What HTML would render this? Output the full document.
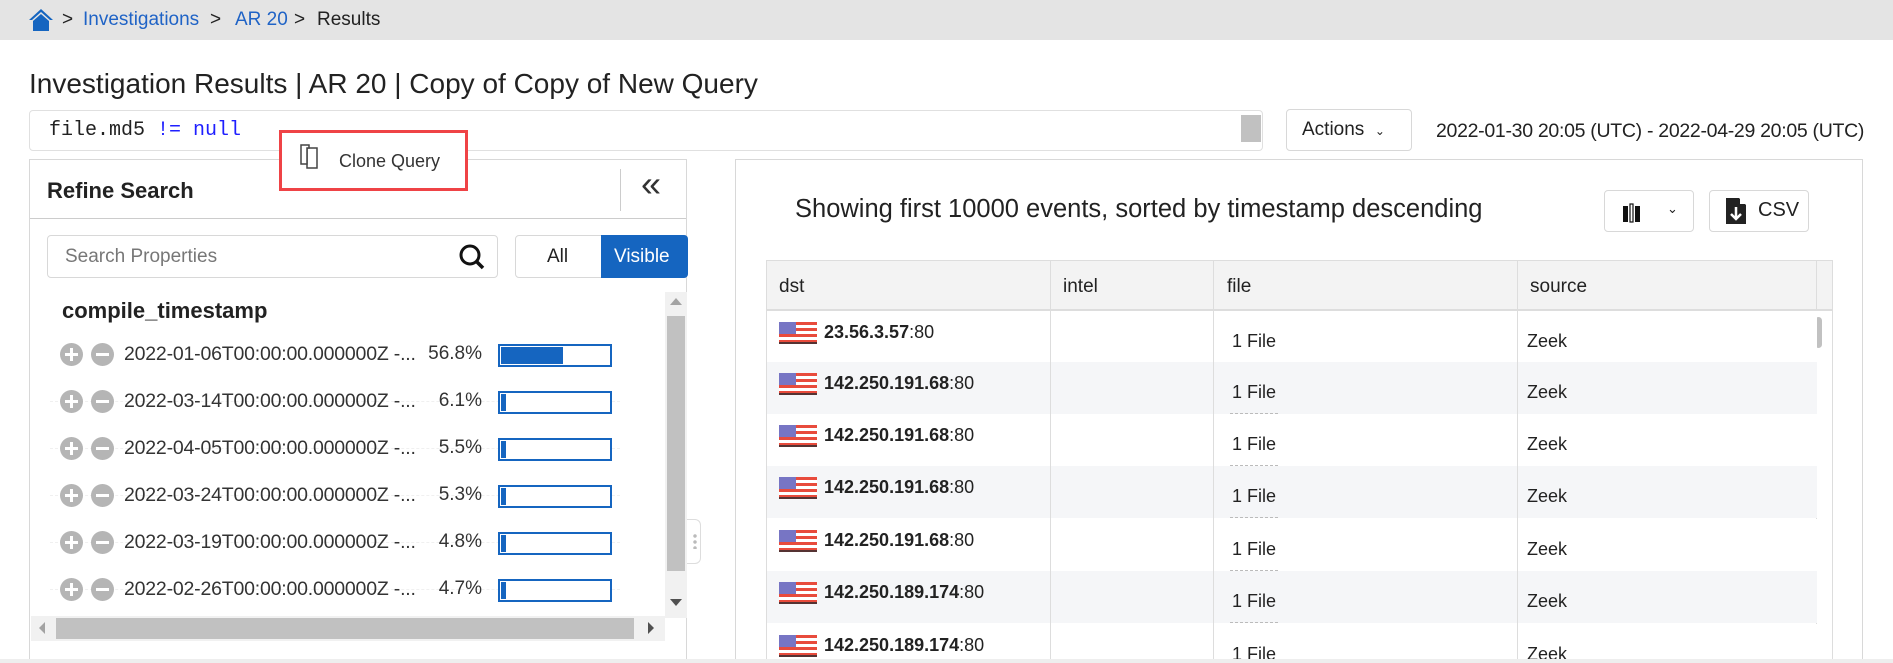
<!DOCTYPE html>
<html><head><meta charset="utf-8"><style>
*{box-sizing:border-box;margin:0;padding:0}
body{width:1893px;height:663px;overflow:hidden;background:#fff;font-family:"Liberation Sans",Arial,sans-serif;color:#222;position:relative}
.abs{position:absolute}
.crumb{left:0;top:0;width:1893px;height:40px;background:#e4e4e4}
.crumb span{position:absolute;top:9px;font-size:19px}
.blue{color:#1f63c6}
.page{left:0;top:40px;width:1893px;height:623px;background:#fff;border-radius:6px 6px 0 0}
.btn{border:1px solid #d8d8d8;border-radius:4px;background:#fff}
.row{position:absolute;left:50px;width:570px;height:47px;border-bottom:1px dashed #f0f0f0}
.circ{position:absolute;width:23px;height:23px;border-radius:50%;background:#b5b5b5;top:-12px}
.circ:before{content:"";position:absolute;left:5px;top:10px;width:13px;height:3px;background:#fff}
.plus:after{content:"";position:absolute;left:10px;top:5px;width:3px;height:13px;background:#fff}
.rtxt{position:absolute;left:74px;top:-12px;font-size:19.5px;color:#333;white-space:nowrap;letter-spacing:-0.2px}
.pct{position:absolute;right:138px;top:-12px;font-size:19px;color:#333}
.bar{position:absolute;left:448px;top:-11px;width:114px;height:23px;border:2px solid #1565c0;background:#fff}
.bar i{position:absolute;left:1px;top:1px;height:17px;background:#1565c0}
.tr{position:absolute;left:767px;width:1050px;height:52px}
.flag{position:absolute;left:12px;top:11px;width:38px;height:22px;background:repeating-linear-gradient(#e84b3c 0 3px,#fff 3px 6px);border-bottom:2px solid #533}
.flag:before{content:"";position:absolute;left:0;top:0;width:17px;height:12px;background:#7775c4}
.dst{position:absolute;left:57px;top:11px;font-size:18px}
.file{position:absolute;left:17px;top:20px;font-size:18px;padding:0 2px 10px;border-bottom:1px dashed #bbb}
.src{position:absolute;left:10px;top:20px;font-size:18px}
</style></head><body>
<div class="abs crumb">
<svg class="abs" style="left:28px;top:8px" width="26" height="24" viewBox="0 0 26 24"><path d="M13 1 L1 12 L4 12 L13 4 L22 12 L25 12 Z" fill="#1565c0"/><path d="M5 13 L13 6 L21 13 L21 23 L5 23 Z" fill="#1565c0"/></svg>
<span style="left:62px">&gt;</span><span class="blue" style="left:83px">Investigations</span><span style="left:210px">&gt;</span><span class="blue" style="left:235px">AR 20</span><span style="left:294px">&gt;</span><span style="left:317px">Results</span>
</div>
<div class="abs page"></div>
<div class="abs" style="left:29px;top:68px;font-size:28px;color:#222">Investigation Results | AR 20 | Copy of Copy of New Query</div>
<div class="abs btn" style="left:29px;top:110px;width:1234px;height:41px;border-color:#e0e0e0"></div>
<div class="abs" style="left:49px;top:119px;font-family:'Liberation Mono',monospace;font-size:20px">file.md5 <span style="color:#1f1fff">!= null</span></div>
<div class="abs" style="left:1241px;top:115px;width:20px;height:27px;background:#c1c1c1"></div>
<div class="abs btn" style="left:1286px;top:109px;width:126px;height:42px"></div>
<div class="abs" style="left:1302px;top:119px;font-size:19px">Actions &nbsp;<span style="font-size:12px">&#8964;</span></div>
<div class="abs" style="left:1436px;top:120px;font-size:19.5px;letter-spacing:-0.3px">2022-01-30 20:05 (UTC) - 2022-04-29 20:05 (UTC)</div>

<div class="abs" style="left:29px;top:159px;width:658px;height:504px;border:1px solid #d8d8d8;border-bottom:none"></div>
<div class="abs" style="left:30px;top:218px;width:656px;height:1px;background:#ccc"></div>
<div class="abs" style="left:47px;top:178px;font-size:22px;font-weight:bold">Refine Search</div>
<div class="abs" style="left:620px;top:169px;width:1px;height:42px;background:#ccc"></div>
<div class="abs" style="left:641px;top:166px;font-size:36px;color:#333;line-height:1">&#171;</div>
<div class="abs btn" style="left:47px;top:235px;width:451px;height:43px"></div>
<div class="abs" style="left:65px;top:246px;font-size:19px;color:#777">Search Properties</div>
<svg class="abs" style="left:458px;top:243px" width="28" height="28" viewBox="0 0 28 28"><circle cx="12" cy="12" r="9" fill="none" stroke="#111" stroke-width="3"/><path d="M18 18 L25 25" stroke="#111" stroke-width="3.5"/></svg>
<div class="abs btn" style="left:515px;top:235px;width:173px;height:43px"></div>
<div class="abs" style="left:601px;top:235px;width:87px;height:43px;background:#1565c0;border-radius:0 4px 4px 0"></div>
<div class="abs" style="left:547px;top:246px;font-size:19px">All</div>
<div class="abs" style="left:614px;top:246px;font-size:19px;color:#fff">Visible</div>
<div class="abs" style="left:62px;top:298px;font-size:22px;font-weight:bold;color:#222">compile_timestamp</div>
<div class="row" style="top:355px"><div class="circ plus" style="left:10px"></div><div class="circ" style="left:41px"></div><div class="rtxt">2022-01-06T00:00:00.000000Z -...</div><div class="pct">56.8%</div><div class="bar"><i style="width:62px"></i></div></div>
<div class="row" style="top:402px"><div class="circ plus" style="left:10px"></div><div class="circ" style="left:41px"></div><div class="rtxt">2022-03-14T00:00:00.000000Z -...</div><div class="pct">6.1%</div><div class="bar"><i style="width:5px"></i></div></div>
<div class="row" style="top:449px"><div class="circ plus" style="left:10px"></div><div class="circ" style="left:41px"></div><div class="rtxt">2022-04-05T00:00:00.000000Z -...</div><div class="pct">5.5%</div><div class="bar"><i style="width:5px"></i></div></div>
<div class="row" style="top:496px"><div class="circ plus" style="left:10px"></div><div class="circ" style="left:41px"></div><div class="rtxt">2022-03-24T00:00:00.000000Z -...</div><div class="pct">5.3%</div><div class="bar"><i style="width:5px"></i></div></div>
<div class="row" style="top:543px"><div class="circ plus" style="left:10px"></div><div class="circ" style="left:41px"></div><div class="rtxt">2022-03-19T00:00:00.000000Z -...</div><div class="pct">4.8%</div><div class="bar"><i style="width:5px"></i></div></div>
<div class="row" style="top:590px;border:none"><div class="circ plus" style="left:10px"></div><div class="circ" style="left:41px"></div><div class="rtxt">2022-02-26T00:00:00.000000Z -...</div><div class="pct">4.7%</div><div class="bar"><i style="width:5px"></i></div></div>
<div class="abs" style="left:665px;top:292px;width:22px;height:326px;background:#f1f1f1"></div>
<div class="abs" style="left:667px;top:316px;width:18px;height:255px;background:#c1c1c1"></div>
<div class="abs" style="left:670px;top:298px;width:0;height:0;border:6px solid transparent;border-bottom:7px solid #a3a3a3;border-top:none"></div>
<div class="abs" style="left:670px;top:599px;width:0;height:0;border:6px solid transparent;border-top:7px solid #505050;border-bottom:none"></div>
<div class="abs" style="left:31px;top:616px;width:634px;height:25px;background:#f1f1f1"></div>
<div class="abs" style="left:56px;top:618px;width:578px;height:21px;background:#c1c1c1"></div>
<div class="abs" style="left:39px;top:622px;border:6px solid transparent;border-right:6px solid #a3a3a3;border-left:none"></div>
<div class="abs" style="left:648px;top:622px;border:6px solid transparent;border-left:6px solid #505050;border-right:none"></div>
<div class="abs" style="left:687px;top:519px;width:14px;height:45px;border:1px solid #ddd;border-left:none;border-radius:0 6px 6px 0;background:#fff"></div>
<div class="abs" style="left:693px;top:533px;width:4px;height:16px;background:radial-gradient(circle,#bbb 1.5px,transparent 2px) 0 0/4px 6px"></div>

<div class="abs" style="left:279px;top:130px;width:189px;height:61px;border:3px solid #ef4346;background:#fff"></div>
<svg class="abs" style="left:299px;top:144px" width="24" height="28" viewBox="0 0 24 28"><path d="M8 4 H18 V24 H8 Z" fill="none" stroke="#444" stroke-width="1.5"/><path d="M2 1 H10 V4 H8 V20 H2 Z" fill="#fff" stroke="#444" stroke-width="1.5"/></svg>
<div class="abs" style="left:339px;top:151px;font-size:18px;color:#333">Clone Query</div>

<div class="abs" style="left:735px;top:159px;width:1128px;height:504px;border:1px solid #d8d8d8;border-bottom:none"></div>
<div class="abs" style="left:795px;top:195px;font-size:25.5px;color:#222">Showing first 10000 events, sorted by timestamp descending</div>
<div class="abs btn" style="left:1604px;top:190px;width:90px;height:42px"></div>
<svg class="abs" style="left:1622px;top:201px" width="20" height="22" viewBox="0 0 20 22"><rect x="1" y="5" width="5" height="16" fill="#111"/><rect x="8" y="3" width="3" height="18" fill="none" stroke="#111" stroke-width="1.2"/><rect x="13" y="5" width="5" height="16" fill="#111"/></svg>
<div class="abs" style="left:1667px;top:201px;font-size:13px">&#8964;</div>
<div class="abs btn" style="left:1709px;top:190px;width:100px;height:42px"></div>
<svg class="abs" style="left:1725px;top:197px" width="22" height="28" viewBox="0 0 22 28"><path d="M1 1 H14 L21 8 V27 H1 Z" fill="#222"/><path d="M15 1 L21 7 H15 Z" fill="#fff"/><path d="M11 10 V22 M6 17 L11 22 L16 17" stroke="#fff" stroke-width="2.5" fill="none"/></svg>
<div class="abs" style="left:1758px;top:199px;font-size:20px">CSV</div>

<div class="abs" style="left:766px;top:260px;width:1067px;height:403px;border:1px solid #ddd;border-bottom:none"></div>
<div class="abs" style="left:767px;top:261px;width:1065px;height:50px;background:#f3f3f3;border-bottom:2px solid #ddd"></div>
<div class="abs" style="left:1816px;top:261px;width:1px;height:50px;background:#ddd"></div>
<div class="abs" style="left:1816px;top:311px;width:1px;height:352px;background:#ddd"></div>
<div class="abs" style="left:1815px;top:317px;width:7px;height:31px;border-radius:4px;background:#c1c1c1"></div>
<div class="abs" style="left:779px;top:276px;font-size:19px">dst</div>
<div class="abs" style="left:1063px;top:276px;font-size:19px">intel</div>
<div class="abs" style="left:1227px;top:276px;font-size:19px">file</div>
<div class="abs" style="left:1530px;top:276px;font-size:19px">source</div>

<div class="tr" style="top:311px;background:#fff"><span class="flag"></span><span class="dst"><b>23.56.3.57</b>:80</span><span class="file" style="left:463px">1 File</span><span class="src" style="left:760px">Zeek</span></div>
<div class="tr" style="top:362px;background:#f5f6f8"><span class="flag"></span><span class="dst"><b>142.250.191.68</b>:80</span><span class="file" style="left:463px">1 File</span><span class="src" style="left:760px">Zeek</span></div>
<div class="tr" style="top:414px;background:#fff"><span class="flag"></span><span class="dst"><b>142.250.191.68</b>:80</span><span class="file" style="left:463px">1 File</span><span class="src" style="left:760px">Zeek</span></div>
<div class="tr" style="top:466px;background:#f5f6f8"><span class="flag"></span><span class="dst"><b>142.250.191.68</b>:80</span><span class="file" style="left:463px">1 File</span><span class="src" style="left:760px">Zeek</span></div>
<div class="tr" style="top:519px;background:#fff"><span class="flag"></span><span class="dst"><b>142.250.191.68</b>:80</span><span class="file" style="left:463px">1 File</span><span class="src" style="left:760px">Zeek</span></div>
<div class="tr" style="top:571px;background:#f5f6f8"><span class="flag"></span><span class="dst"><b>142.250.189.174</b>:80</span><span class="file" style="left:463px">1 File</span><span class="src" style="left:760px">Zeek</span></div>
<div class="tr" style="top:624px;background:#fff;height:35px;overflow:hidden"><span class="flag"></span><span class="dst"><b>142.250.189.174</b>:80</span><span class="file" style="left:463px">1 File</span><span class="src" style="left:760px">Zeek</span></div>
<div class="abs" style="left:1050px;top:261px;width:1px;height:400px;background:#ddd"></div>
<div class="abs" style="left:1213px;top:261px;width:1px;height:400px;background:#ddd"></div>
<div class="abs" style="left:1517px;top:261px;width:1px;height:400px;background:#ddd"></div>
<div class="abs" style="left:0;top:659px;width:1893px;height:4px;background:#eee"></div>
</body></html>
